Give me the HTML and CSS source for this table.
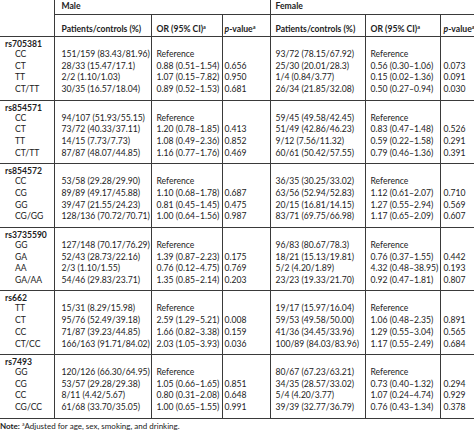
FILE: index.html
```html
<!DOCTYPE html>
<html>
<head>
<meta charset="utf-8">
<link rel="stylesheet" href="styles.css">
</head>
<body>
<div class="page">
<table class="tbl">
<colgroup>
<col class="c1"><col class="c2"><col class="c3"><col class="c4"><col class="c5"><col class="c6"><col class="c7">
</colgroup>
<thead>
<tr class="h1">
<th class="lab" rowspan="2"></th>
<th class="sex" colspan="3">Male</th>
<th class="sex f" colspan="3">Female</th>
</tr>
<tr class="h2">
<th class="pc">Patients/controls (%)</th>
<th class="or">OR (95% CI)<sup>a</sup></th>
<th class="pv"><i>p</i>-value<sup>a</sup></th>
<th class="pc f">Patients/controls (%)</th>
<th class="or f">OR (95% CI)<sup>a</sup></th>
<th class="pv f"><i>p</i>-value<sup>a</sup></th>
</tr>
</thead>
<tbody>
<tr class="snp"><td class="lab">rs705381</td><td class="pc"></td><td class="or"></td><td class="pv"></td><td class="pc f"></td><td class="or f"></td><td class="pv f"></td></tr>
<tr><td class="gt">CC</td><td class="pc">151/159 (83.43/81.96)</td><td class="or">Reference</td><td class="pv"></td><td class="pc f">93/72 (78.15/67.92)</td><td class="or f">Reference</td><td class="pv f"></td></tr>
<tr><td class="gt">CT</td><td class="pc">28/33 (15.47/17.1)</td><td class="or">0.88 (0.51–1.54)</td><td class="pv">0.656</td><td class="pc f">25/30 (20.01/28.3)</td><td class="or f">0.56 (0.30–1.06)</td><td class="pv f">0.073</td></tr>
<tr><td class="gt">TT</td><td class="pc">2/2 (1.10/1.03)</td><td class="or">1.07 (0.15–7.82)</td><td class="pv">0.950</td><td class="pc f">1/4 (0.84/3.77)</td><td class="or f">0.15 (0.02–1.36)</td><td class="pv f">0.091</td></tr>
<tr class="last"><td class="gt">CT/TT</td><td class="pc">30/35 (16.57/18.04)</td><td class="or">0.89 (0.52–1.53)</td><td class="pv">0.681</td><td class="pc f">26/34 (21.85/32.08)</td><td class="or f">0.50 (0.27–0.94)</td><td class="pv f">0.030</td></tr>
</tbody>
<tbody>
<tr class="snp"><td class="lab">rs854571</td><td class="pc"></td><td class="or"></td><td class="pv"></td><td class="pc f"></td><td class="or f"></td><td class="pv f"></td></tr>
<tr><td class="gt">CC</td><td class="pc">94/107 (51.93/55.15)</td><td class="or">Reference</td><td class="pv"></td><td class="pc f">59/45 (49.58/42.45)</td><td class="or f">Reference</td><td class="pv f"></td></tr>
<tr><td class="gt">CT</td><td class="pc">73/72 (40.33/37.11)</td><td class="or">1.20 (0.78–1.85)</td><td class="pv">0.413</td><td class="pc f">51/49 (42.86/46.23)</td><td class="or f">0.83 (0.47–1.48)</td><td class="pv f">0.526</td></tr>
<tr><td class="gt">TT</td><td class="pc">14/15 (7.73/7.73)</td><td class="or">1.08 (0.49–2.36)</td><td class="pv">0.852</td><td class="pc f">9/12 (7.56/11.32)</td><td class="or f">0.59 (0.22–1.58)</td><td class="pv f">0.291</td></tr>
<tr class="last"><td class="gt">CT/TT</td><td class="pc">87/87 (48.07/44.85)</td><td class="or">1.16 (0.77–1.76)</td><td class="pv">0.469</td><td class="pc f">60/61 (50.42/57.55)</td><td class="or f">0.79 (0.46–1.36)</td><td class="pv f">0.391</td></tr>
</tbody>
<tbody>
<tr class="snp"><td class="lab">rs854572</td><td class="pc"></td><td class="or"></td><td class="pv"></td><td class="pc f"></td><td class="or f"></td><td class="pv f"></td></tr>
<tr><td class="gt">CC</td><td class="pc">53/58 (29.28/29.90)</td><td class="or">Reference</td><td class="pv"></td><td class="pc f">36/35 (30.25/33.02)</td><td class="or f">Reference</td><td class="pv f"></td></tr>
<tr><td class="gt">CG</td><td class="pc">89/89 (49.17/45.88)</td><td class="or">1.10 (0.68–1.78)</td><td class="pv">0.687</td><td class="pc f">63/56 (52.94/52.83)</td><td class="or f">1.12 (0.61–2.07)</td><td class="pv f">0.710</td></tr>
<tr><td class="gt">GG</td><td class="pc">39/47 (21.55/24.23)</td><td class="or">0.81 (0.45–1.45)</td><td class="pv">0.475</td><td class="pc f">20/15 (16.81/14.15)</td><td class="or f">1.27 (0.55–2.94)</td><td class="pv f">0.569</td></tr>
<tr class="last"><td class="gt">CG/GG</td><td class="pc">128/136 (70.72/70.71)</td><td class="or">1.00 (0.64–1.56)</td><td class="pv">0.987</td><td class="pc f">83/71 (69.75/66.98)</td><td class="or f">1.17 (0.65–2.09)</td><td class="pv f">0.607</td></tr>
</tbody>
<tbody>
<tr class="snp"><td class="lab">rs3735590</td><td class="pc"></td><td class="or"></td><td class="pv"></td><td class="pc f"></td><td class="or f"></td><td class="pv f"></td></tr>
<tr><td class="gt">GG</td><td class="pc">127/148 (70.17/76.29)</td><td class="or">Reference</td><td class="pv"></td><td class="pc f">96/83 (80.67/78.3)</td><td class="or f">Reference</td><td class="pv f"></td></tr>
<tr><td class="gt">GA</td><td class="pc">52/43 (28.73/22.16)</td><td class="or">1.39 (0.87–2.23)</td><td class="pv">0.175</td><td class="pc f">18/21 (15.13/19.81)</td><td class="or f">0.76 (0.37–1.55)</td><td class="pv f">0.442</td></tr>
<tr><td class="gt">AA</td><td class="pc">2/3 (1.10/1.55)</td><td class="or">0.76 (0.12–4.75)</td><td class="pv">0.769</td><td class="pc f">5/2 (4.20/1.89)</td><td class="or f">4.32 (0.48–38.95)</td><td class="pv f">0.193</td></tr>
<tr class="last"><td class="gt">GA/AA</td><td class="pc">54/46 (29.83/23.71)</td><td class="or">1.35 (0.85–2.14)</td><td class="pv">0.203</td><td class="pc f">23/23 (19.33/21.70)</td><td class="or f">0.92 (0.47–1.81)</td><td class="pv f">0.807</td></tr>
</tbody>
<tbody>
<tr class="snp"><td class="lab">rs662</td><td class="pc"></td><td class="or"></td><td class="pv"></td><td class="pc f"></td><td class="or f"></td><td class="pv f"></td></tr>
<tr><td class="gt">TT</td><td class="pc">15/31 (8.29/15.98)</td><td class="or">Reference</td><td class="pv"></td><td class="pc f">19/17 (15.97/16.04)</td><td class="or f">Reference</td><td class="pv f"></td></tr>
<tr><td class="gt">CT</td><td class="pc">95/76 (52.49/39.18)</td><td class="or">2.59 (1.29–5.21)</td><td class="pv">0.008</td><td class="pc f">59/53 (49.58/50.00)</td><td class="or f">1.06 (0.48–2.35)</td><td class="pv f">0.891</td></tr>
<tr><td class="gt">CC</td><td class="pc">71/87 (39.23/44.85)</td><td class="or">1.66 (0.82–3.38)</td><td class="pv">0.159</td><td class="pc f">41/36 (34.45/33.96)</td><td class="or f">1.29 (0.55–3.04)</td><td class="pv f">0.565</td></tr>
<tr class="last"><td class="gt">CT/CC</td><td class="pc">166/163 (91.71/84.02)</td><td class="or">2.03 (1.05–3.93)</td><td class="pv">0.036</td><td class="pc f">100/89 (84.03/83.96)</td><td class="or f">1.17 (0.55–2.49)</td><td class="pv f">0.684</td></tr>
</tbody>
<tbody>
<tr class="snp"><td class="lab">rs7493</td><td class="pc"></td><td class="or"></td><td class="pv"></td><td class="pc f"></td><td class="or f"></td><td class="pv f"></td></tr>
<tr><td class="gt">GG</td><td class="pc">120/126 (66.30/64.95)</td><td class="or">Reference</td><td class="pv"></td><td class="pc f">80/67 (67.23/63.21)</td><td class="or f">Reference</td><td class="pv f"></td></tr>
<tr><td class="gt">CG</td><td class="pc">53/57 (29.28/29.38)</td><td class="or">1.05 (0.66–1.65)</td><td class="pv">0.851</td><td class="pc f">34/35 (28.57/33.02)</td><td class="or f">0.73 (0.40–1.32)</td><td class="pv f">0.294</td></tr>
<tr><td class="gt">CC</td><td class="pc">8/11 (4.42/5.67)</td><td class="or">0.80 (0.31–2.08)</td><td class="pv">0.648</td><td class="pc f">5/4 (4.20/3.77)</td><td class="or f">1.07 (0.24–4.74)</td><td class="pv f">0.929</td></tr>
<tr class="last"><td class="gt">CG/CC</td><td class="pc">61/68 (33.70/35.05)</td><td class="or">1.00 (0.65–1.55)</td><td class="pv">0.991</td><td class="pc f">39/39 (32.77/36.79)</td><td class="or f">0.76 (0.43–1.34)</td><td class="pv f">0.378</td></tr>
</tbody>
</table>
<p class="note"><b>Note:</b> <sup>a</sup>Adjusted for age, sex, smoking, and drinking.</p>
</div>
</body>
</html>
```

FILE: styles.css
```css
html, body {
  margin: 0;
  padding: 0;
  background: #ffffff;
}
.page {
  width: 474px;
  height: 431px;
  overflow: hidden;
  font-family: Lato, "Open Sans", sans-serif;
  font-size: 8.6px;
  color: #222222;
}
.tbl {
  border-collapse: collapse;
  table-layout: fixed;
  width: 490px;
}
.c1 { width: 54px; }
.c2 { width: 97px; }
.c3 { width: 71px; }
.c4 { width: 48px; }
.c5 { width: 95px; }
.c6 { width: 75px; }
.c7 { width: 50px; }
.tbl th, .tbl td {
  padding: 0;
  text-align: left;
  white-space: nowrap;
  vertical-align: top;
  line-height: 11.7px;
}
.tbl th {
  font-weight: 700;
}
.tbl sup {
  font-size: 5.5px;
  line-height: 0;
  vertical-align: 3.5px;
}
.h1 th {
  padding-top: 1px;
  padding-bottom: 3px;
  line-height: 10px;
}
.h1 .sex {
  border-left: 1px solid #3a3a3a;
  border-bottom: 1px solid #3a3a3a;
}
.h2 th {
  padding-top: 9px;
  padding-bottom: 2px;
  line-height: 10px;
  border-bottom: 1px solid #3a3a3a;
}
.h1 .lab {
  border-bottom: 1px solid #3a3a3a;
}
.tbl tbody {
  border-bottom: 1px solid #3a3a3a;
}
.tbl .pc, .tbl .or, .tbl .pv, .tbl .sex {
  border-left: 1px solid #3a3a3a;
}
.lab {
  padding-left: 5px !important;
  font-weight: 700;
}
.gt {
  padding-left: 15px !important;
}
.pc, .sex { padding-left: 7px !important; }
.or { padding-left: 5px !important; }
.pv { padding-left: 2px !important; }
.pc.f, .sex.f { padding-left: 5px !important; }
.or.f { padding-left: 5px !important; }
.pv.f { padding-left: 3px !important; }
.snp td {
  padding-top: 2px;
  padding-bottom: 0;
  line-height: 10px;
}
.last td {
  padding-bottom: 3.8px;
}
.note {
  margin: 2px 0 0 0;
  font-size: 8px;
  line-height: 10px;
  white-space: nowrap;
}
.note b { font-weight: 700; }
.note sup {
  font-size: 5px;
  line-height: 0;
  vertical-align: 3px;
}
```
